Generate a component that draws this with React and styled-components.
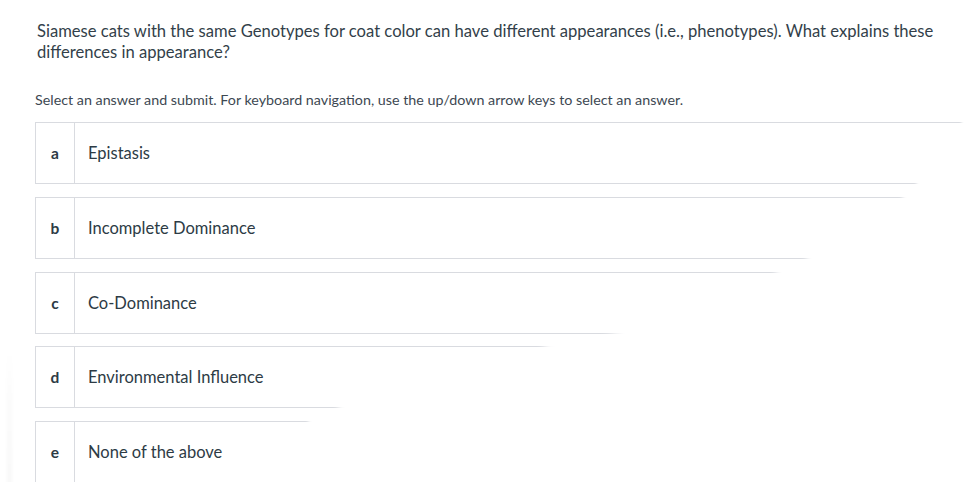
import React from 'react'
import styled, { createGlobalStyle } from 'styled-components'

const GlobalStyle = createGlobalStyle`
  html, body {
    margin: 0;
    padding: 0;
    background: #ffffff;
  }
  body {
    font-family: Lato, "Open Sans", sans-serif;
    color: #2d3b45;
    overflow: hidden;
  }
`

const Page = styled.div`
  position: relative;
  width: 975px;
  height: 482px;
  overflow: hidden;
  padding: 21px 0 0 35px;
  box-sizing: border-box;
`

const Question = styled.p`
  margin: 0 0 0 2px;
  width: 920px;
  font-size: 16.6px;
  line-height: 21px;
  color: #333f4a;
`

const Hint = styled.p`
  margin: 28px 0 13px;
  font-size: 14.3px;
  line-height: 18px;
  color: #3d4852;
`

const AnswerList = styled.div`
  display: flex;
  flex-direction: column;
  gap: 12.8px;
`

const Answer = styled.div`
  display: flex;
  height: 62px;
  box-sizing: border-box;
  border: 1px solid #d9dbe0;
  border-right: none;
  align-items: stretch;
`

const Letter = styled.div`
  width: 38px;
  flex: none;
  border-right: 1px solid #d9dbe0;
  display: flex;
  align-items: center;
  justify-content: center;
  font-size: 15.5px;
  font-weight: 700;
  color: #2d3b45;
`

const Label = styled.div`
  display: flex;
  align-items: center;
  padding-left: 13px;
  font-size: 16.5px;
  color: #2d3b45;
`

const Veil = styled.svg`
  position: absolute;
  left: 0;
  top: 0;
  pointer-events: none;
`

const answers = [
  ['a', 'Epistasis'],
  ['b', 'Incomplete Dominance'],
  ['c', 'Co-Dominance'],
  ['d', 'Environmental Influence'],
  ['e', 'None of the above']
]

const App = () => (
  <Page>
    <GlobalStyle />
    <Question>
      Siamese cats with the same Genotypes for coat color can have different appearances (i.e., phenotypes). What explains these differences in appearance?
    </Question>
    <Hint>Select an answer and submit. For keyboard navigation, use the up/down arrow keys to select an answer.</Hint>
    <AnswerList>
      {answers.map(([key, text]) => (
        <Answer key={key}>
          <Letter>{key}</Letter>
          <Label>{text}</Label>
        </Answer>
      ))}
    </AnswerList>
    <Veil width="975" height="482" viewBox="0 0 975 482">
      <defs>
        <filter id="soft" x="-5%" y="-5%" width="110%" height="110%">
          <feGaussianBlur stdDeviation="1.2" />
        </filter>
        <filter id="haze" x="-100%" y="-20%" width="300%" height="140%">
          <feGaussianBlur stdDeviation="2" />
        </filter>
        <linearGradient id="edge" x1="0" y1="0" x2="0" y2="1">
          <stop offset="0" stopColor="#000" stopOpacity="0" />
          <stop offset="0.4" stopColor="#000" stopOpacity="0.03" />
          <stop offset="1" stopColor="#000" stopOpacity="0.05" />
        </linearGradient>
      </defs>
      <polygon
        filter="url(#soft)"
        fill="#ffffff"
        points="966,0 980,0 980,490 236,490 310,420 342,406 550,345 622,332 780,271 810,257 905,196 917,183 962,122 966,110"
      />
      <rect x="8" y="345" width="3" height="140" fill="url(#edge)" filter="url(#haze)" />
    </Veil>
  </Page>
)

export default App
